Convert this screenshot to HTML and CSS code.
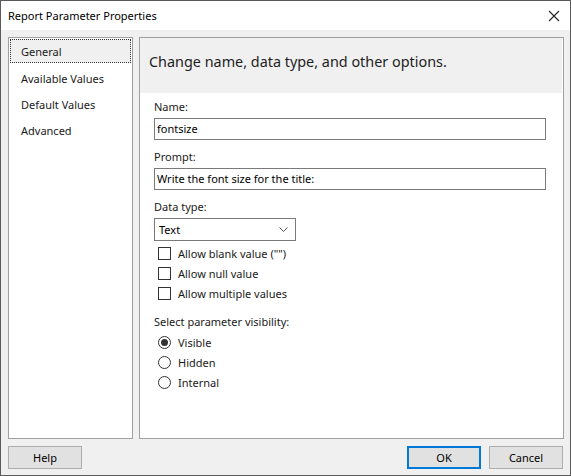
FILE: index.html
```html
<!DOCTYPE html>
<html>
<head>
<meta charset="utf-8">
<link rel="stylesheet" href="styles.css">
</head>
<body>
<div class="window">
  <div class="titlebar">
    <span class="title">Report Parameter Properties</span>
    <svg class="close" width="12" height="12" viewBox="0 0 12 12"><path d="M1 1 L11 11 M11 1 L1 11" stroke="#222" stroke-width="1.1" fill="none"/></svg>
  </div>
  <div class="main">
    <div class="nav">
      <div class="nav-item selected">General</div>
      <div class="nav-item">Available Values</div>
      <div class="nav-item">Default Values</div>
      <div class="nav-item">Advanced</div>
    </div>
    <div class="content">
      <div class="header">Change name, data type, and other options.</div>
      <div class="form">
        <div class="label">Name:</div>
        <div class="input">fontsize</div>
        <div class="label">Prompt:</div>
        <div class="input">Write the font size for the title:</div>
        <div class="label">Data type:</div>
        <div class="select"><span>Text</span>
          <svg width="9" height="5" viewBox="0 0 9 5"><path d="M0.5 0.5 L4.5 4.5 L8.5 0.5" stroke="#555" stroke-width="1" fill="none"/></svg>
        </div>
        <div class="checks">
          <div class="check"><span class="box"></span>Allow blank value ("")</div>
          <div class="check"><span class="box"></span>Allow null value</div>
          <div class="check"><span class="box"></span>Allow multiple values</div>
        </div>
        <div class="label vis">Select parameter visibility:</div>
        <div class="radios">
          <div class="radio"><span class="circle on"></span>Visible</div>
          <div class="radio"><span class="circle"></span>Hidden</div>
          <div class="radio"><span class="circle"></span>Internal</div>
        </div>
      </div>
    </div>
  </div>
  <div class="footer">
    <div class="btn">Help</div>
    <div class="spacer"></div>
    <div class="btn default">OK</div>
    <div class="btn">Cancel</div>
  </div>
</div>
</body>
</html>
```
FILE: styles.css
```css
* { box-sizing: border-box; }
html, body { margin: 0; padding: 0; }
body {
  font-family: "Noto Sans", "Open Sans", sans-serif;
  font-size: 11px;
  color: #000;
  background: #fff;
}
.window {
  width: 571px;
  height: 476px;
  border: 1px solid #5a5a5a;
  background: #f0f0f0;
  display: flex;
  flex-direction: column;
}
.titlebar {
  height: 29px;
  background: #fff;
  display: flex;
  align-items: center;
  padding: 0 10px 0 7px;
  flex: none;
}
.title { flex: 1; font-size: 11px; color: #000; }
.main {
  display: flex;
  gap: 6px;
  padding: 7px 6px 0 7px;
  height: 409px;
  flex: none;
}
.nav {
  width: 125px;
  background: #fff;
  border: 1px solid #a0a0a0;
  padding: 1px;
}
.nav-item {
  height: 26px;
  line-height: 26px;
  padding-left: 10px;
  border: 1px solid transparent;
  color: #1a1a1a;
}
.nav-item.selected {
  background: #f0f0f0;
  border: 1px dotted #333;
  height: 24px;
  line-height: 24px;
  margin-bottom: 2px;
}
.content {
  flex: 1;
  background: #fff;
  border: 1px solid #a0a0a0;
  display: flex;
  flex-direction: column;
}
.header {
  height: 55px;
  background: #f0f0f0;
  padding: 14px 0 0 9px;
  font-size: 14.4px;
  line-height: 20px;
  color: #1e1e1e;
  margin: 0 1px 0 0;
}
.form {
  padding: 6px 17px 0 14px;
}
.label {
  height: 15px;
  line-height: 15px;
  margin-bottom: 4px;
  color: #1a1a1a;
}
.input {
  height: 22px;
  border: 1px solid #7a7a7a;
  padding-left: 2px;
  line-height: 20px;
  margin-bottom: 9px;
}
.select {
  width: 142px;
  height: 23px;
  border: 1px solid #7a7a7a;
  padding: 0 7px 0 4px;
  display: flex;
  align-items: center;
  justify-content: space-between;
}
.checks { padding: 2px 0 0 4px; }
.check, .radio {
  height: 20px;
  display: flex;
  align-items: center;
  gap: 7px;
  color: #1a1a1a;
}
.box {
  width: 13px;
  height: 13px;
  border: 1px solid #333;
  background: #fff;
}
.vis { margin-top: 11px; margin-bottom: 3px; }
.radios { padding-left: 4px; }
.circle {
  width: 13px;
  height: 13px;
  border: 1px solid #333;
  border-radius: 50%;
  display: flex;
  align-items: center;
  justify-content: center;
}
.circle.on::after {
  content: "";
  width: 7px;
  height: 7px;
  border-radius: 50%;
  background: #333;
}
.footer {
  display: flex;
  gap: 8px;
  padding: 7px 7px 0 7px;
}
.spacer { flex: 1; }
.btn {
  width: 74px;
  height: 23px;
  border: 1px solid #adadad;
  background: #e1e1e1;
  display: flex;
  align-items: center;
  justify-content: center;
}
.btn.default {
  border: 2px solid #0078d7;
}
```
